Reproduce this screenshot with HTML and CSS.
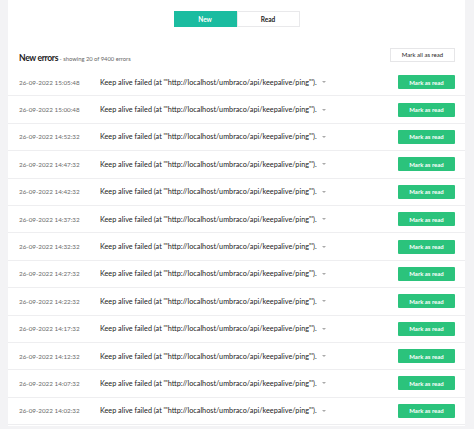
FILE: index.html
```html
<!DOCTYPE html>
<html>
<head>
<meta charset="utf-8">
<link rel="stylesheet" href="styles.css">
</head>
<body>
<div class="card">
  <div class="toggle">
    <button class="tab active">New</button>
    <button class="tab">Read</button>
  </div>
  <div class="header">
    <div class="title"><b>New errors</b><span class="sub"> - showing 20 of 9400 errors</span></div>
    <button class="btn-outline">Mark all as read</button>
  </div>
  <div class="rows">
    <div class="row"><span class="date">26-09-2022 15:05:48</span><span class="msg">Keep alive failed (at '"http://localhost/umbraco/api/keepalive/ping"').</span><span class="caret"></span><button class="btn-green">Mark as read</button></div>
    <div class="row"><span class="date">26-09-2022 15:00:48</span><span class="msg">Keep alive failed (at '"http://localhost/umbraco/api/keepalive/ping"').</span><span class="caret"></span><button class="btn-green">Mark as read</button></div>
    <div class="row"><span class="date">26-09-2022 14:52:32</span><span class="msg">Keep alive failed (at '"http://localhost/umbraco/api/keepalive/ping"').</span><span class="caret"></span><button class="btn-green">Mark as read</button></div>
    <div class="row"><span class="date">26-09-2022 14:47:32</span><span class="msg">Keep alive failed (at '"http://localhost/umbraco/api/keepalive/ping"').</span><span class="caret"></span><button class="btn-green">Mark as read</button></div>
    <div class="row"><span class="date">26-09-2022 14:42:32</span><span class="msg">Keep alive failed (at '"http://localhost/umbraco/api/keepalive/ping"').</span><span class="caret"></span><button class="btn-green">Mark as read</button></div>
    <div class="row"><span class="date">26-09-2022 14:37:32</span><span class="msg">Keep alive failed (at '"http://localhost/umbraco/api/keepalive/ping"').</span><span class="caret"></span><button class="btn-green">Mark as read</button></div>
    <div class="row"><span class="date">26-09-2022 14:32:32</span><span class="msg">Keep alive failed (at '"http://localhost/umbraco/api/keepalive/ping"').</span><span class="caret"></span><button class="btn-green">Mark as read</button></div>
    <div class="row"><span class="date">26-09-2022 14:27:32</span><span class="msg">Keep alive failed (at '"http://localhost/umbraco/api/keepalive/ping"').</span><span class="caret"></span><button class="btn-green">Mark as read</button></div>
    <div class="row"><span class="date">26-09-2022 14:22:32</span><span class="msg">Keep alive failed (at '"http://localhost/umbraco/api/keepalive/ping"').</span><span class="caret"></span><button class="btn-green">Mark as read</button></div>
    <div class="row"><span class="date">26-09-2022 14:17:32</span><span class="msg">Keep alive failed (at '"http://localhost/umbraco/api/keepalive/ping"').</span><span class="caret"></span><button class="btn-green">Mark as read</button></div>
    <div class="row"><span class="date">26-09-2022 14:12:32</span><span class="msg">Keep alive failed (at '"http://localhost/umbraco/api/keepalive/ping"').</span><span class="caret"></span><button class="btn-green">Mark as read</button></div>
    <div class="row"><span class="date">26-09-2022 14:07:32</span><span class="msg">Keep alive failed (at '"http://localhost/umbraco/api/keepalive/ping"').</span><span class="caret"></span><button class="btn-green">Mark as read</button></div>
    <div class="row"><span class="date">26-09-2022 14:02:32</span><span class="msg">Keep alive failed (at '"http://localhost/umbraco/api/keepalive/ping"').</span><span class="caret"></span><button class="btn-green">Mark as read</button></div>
  </div>
</div>
</body>
</html>
```
FILE: styles.css
```css
html, body {
  margin: 0;
  padding: 0;
  background: #f3f3f5;
  font-family: Lato, "Open Sans", sans-serif;
  color: #1b264f;
}
.card {
  background: #fff;
  margin: 0 9px 0 8px;
  padding-top: 11px;
  padding-bottom: 1px;
}
.toggle {
  display: flex;
  justify-content: center;
}
.tab {
  width: 63px;
  height: 16px;
  border: 1px solid #e9e9eb;
  background: #fff;
  font-family: Lato, sans-serif;
  font-weight: bold;
  font-size: 6.5px;
  color: #222;
  padding: 0;
}
.tab.active {
  background: #1bbca0;
  border-color: #1bbca0;
  color: #fff;
}
.header {
  display: flex;
  align-items: center;
  justify-content: space-between;
  margin-top: 21px;
  padding: 0 10px 0 11px;
  height: 13px;
}
.title b {
  font-size: 8.6px;
  font-weight: bold;
  color: #1b1b1b;
  letter-spacing: -0.35px;
}
.sub {
  font-size: 5.8px;
  color: #666;
}
.btn-outline {
  width: 65px;
  height: 14px;
  background: #fff;
  border: 1px solid #e6e6e8;
  font-family: Lato, sans-serif;
  font-size: 6px;
  color: #222;
  padding: 0;
}
.rows {
  margin-top: 8px;
}
.row {
  display: flex;
  align-items: center;
  height: 27.4px;
  box-sizing: border-box;
  border-bottom: 1px solid #eeeef0;
  padding: 0 10px 0 11px;
}
.date {
  width: 81px;
  font-size: 6.3px;
  color: #6a6a6a;
}
.msg {
  font-size: 7.25px;
  color: #222;
}
.caret {
  width: 0;
  height: 0;
  border-left: 2px solid transparent;
  border-right: 2px solid transparent;
  border-top: 2px solid #aaa;
  margin-left: 5px;
}
.btn-green {
  margin-left: auto;
  width: 57px;
  height: 14px;
  background: #2bc37c;
  border: none;
  border-radius: 1px;
  color: #fff;
  font-family: Lato, sans-serif;
  font-size: 6px;
  font-weight: bold;
  padding: 0;
}
```
